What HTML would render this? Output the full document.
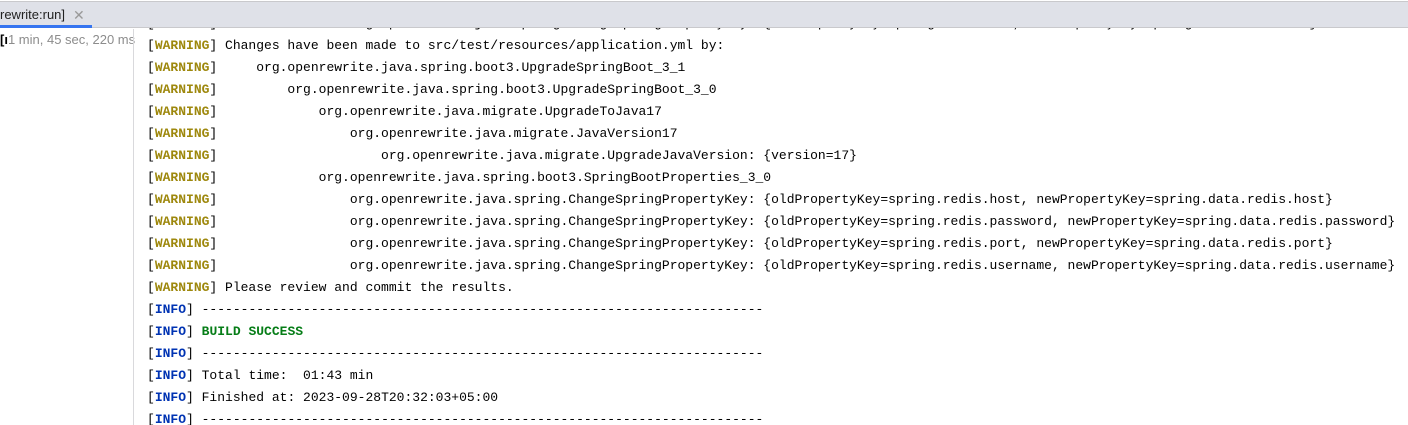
<!DOCTYPE html>
<html><head><meta charset="utf-8"><style>
body{margin:0;width:1408px;height:425px;overflow:hidden;background:#fff;font-family:"Liberation Sans",sans-serif;position:relative}
.bar{position:absolute;left:0;top:1px;width:1408px;height:27px;background:#dfe1e8;border-top:1px solid #c9c9cc;border-bottom:1px solid #c9c9cc;box-sizing:border-box;z-index:2}
.tab{position:absolute;left:0;top:2px;height:26px;width:92px;font-size:13px;color:#222;line-height:26px;z-index:3}
.tab .x{position:absolute;left:73px;top:0;color:#999;font-size:14px}
.ul{position:absolute;left:0;top:25px;width:92px;height:3px;background:#3574f0;z-index:3}
.side{position:absolute;left:0;top:32px;font-size:13px;color:#8c8c8c;white-space:nowrap}
.side b{color:#000;font-weight:bold}
.div{position:absolute;left:133px;top:29px;width:1px;height:396px;background:#d9d9dc}
.con{position:absolute;font-family:"Liberation Mono",monospace;font-size:13px;line-height:22px;color:#000;white-space:pre}
.w{color:#9e880d;font-weight:bold}
.i{color:#0033b3;font-weight:bold}
.g{color:#067d17;font-weight:bold}
.clip{position:absolute;left:134px;top:26px;width:1274px;height:399px;overflow:hidden}
</style></head><body>
<div class="bar"></div>
<div class="tab">rewrite:run]<span class="x">✕</span></div>
<div class="ul"></div>
<div class="side"><b>[ı</b>1 min, 45 sec, 220 ms</div>
<div class="div"></div>
<div class="clip"><div class="con" style="left:13px;top:-13px">[<span class="w">WARNING</span>]                 org.openrewrite.java.spring.ChangeSpringPropertyKey: {oldPropertyKey=spring.redis.url, newPropertyKey=spring.data.redis.url}
[<span class="w">WARNING</span>] Changes have been made to src/test/resources/application.yml by:
[<span class="w">WARNING</span>]     org.openrewrite.java.spring.boot3.UpgradeSpringBoot_3_1
[<span class="w">WARNING</span>]         org.openrewrite.java.spring.boot3.UpgradeSpringBoot_3_0
[<span class="w">WARNING</span>]             org.openrewrite.java.migrate.UpgradeToJava17
[<span class="w">WARNING</span>]                 org.openrewrite.java.migrate.JavaVersion17
[<span class="w">WARNING</span>]                     org.openrewrite.java.migrate.UpgradeJavaVersion: {version=17}
[<span class="w">WARNING</span>]             org.openrewrite.java.spring.boot3.SpringBootProperties_3_0
[<span class="w">WARNING</span>]                 org.openrewrite.java.spring.ChangeSpringPropertyKey: {oldPropertyKey=spring.redis.host, newPropertyKey=spring.data.redis.host}
[<span class="w">WARNING</span>]                 org.openrewrite.java.spring.ChangeSpringPropertyKey: {oldPropertyKey=spring.redis.password, newPropertyKey=spring.data.redis.password}
[<span class="w">WARNING</span>]                 org.openrewrite.java.spring.ChangeSpringPropertyKey: {oldPropertyKey=spring.redis.port, newPropertyKey=spring.data.redis.port}
[<span class="w">WARNING</span>]                 org.openrewrite.java.spring.ChangeSpringPropertyKey: {oldPropertyKey=spring.redis.username, newPropertyKey=spring.data.redis.username}
[<span class="w">WARNING</span>] Please review and commit the results.
[<span class="i">INFO</span>] ------------------------------------------------------------------------
[<span class="i">INFO</span>] <span class="g">BUILD SUCCESS</span>
[<span class="i">INFO</span>] ------------------------------------------------------------------------
[<span class="i">INFO</span>] Total time:  01:43 min
[<span class="i">INFO</span>] Finished at: 2023-09-28T20:32:03+05:00
[<span class="i">INFO</span>] ------------------------------------------------------------------------</div></div>
</body></html>
